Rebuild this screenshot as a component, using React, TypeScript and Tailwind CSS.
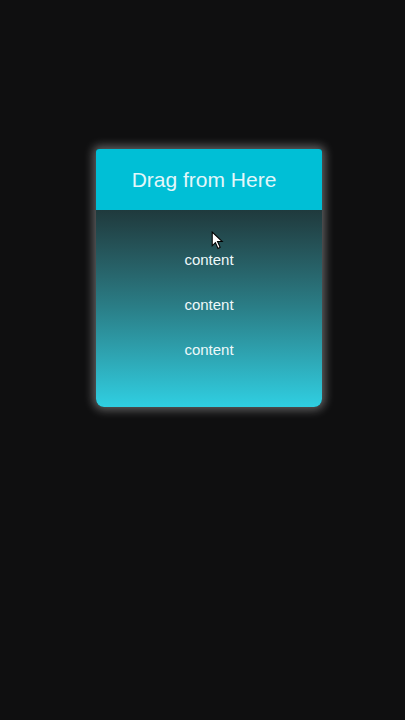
export default function App() {
  return (
    <div className="relative h-[720px] w-[405px] overflow-hidden bg-[#0f0f10] font-['Liberation_Sans',Arial,sans-serif]">
      <div className="pt-[149px] pl-[96px]">
        <div className="w-[226px] overflow-hidden rounded-t-[3px] rounded-b-[8px] shadow-[0_0_10px_3px_rgba(200,200,200,0.45)]">
          <div className="flex h-[61px] items-center justify-center bg-[#00bfd6] pr-[10px] text-[21px] text-[#e3f7fa]">
            Drag from Here
          </div>
          <div className="flex h-[197px] flex-col items-center bg-gradient-to-b from-[#1f3a3d] via-[#2a7f88] to-[#2fcfe2] pt-[39px] text-[15px] text-[#eef9fa]">
            <div className="h-[45px]">content</div>
            <div className="h-[45px]">content</div>
            <div className="h-[45px]">content</div>
          </div>
        </div>
      </div>
      {/* pointeur de la souris */}
      <svg className="absolute left-[211px] top-[231px]" width="13" height="19" viewBox="0 0 12 18">
        <path d="M1 1 L1 14 L4 11 L6.5 16.5 L8.5 15.5 L6 10 L10.5 10 Z" fill="#fff" stroke="#000" strokeWidth="1" />
      </svg>
    </div>
  );
}
